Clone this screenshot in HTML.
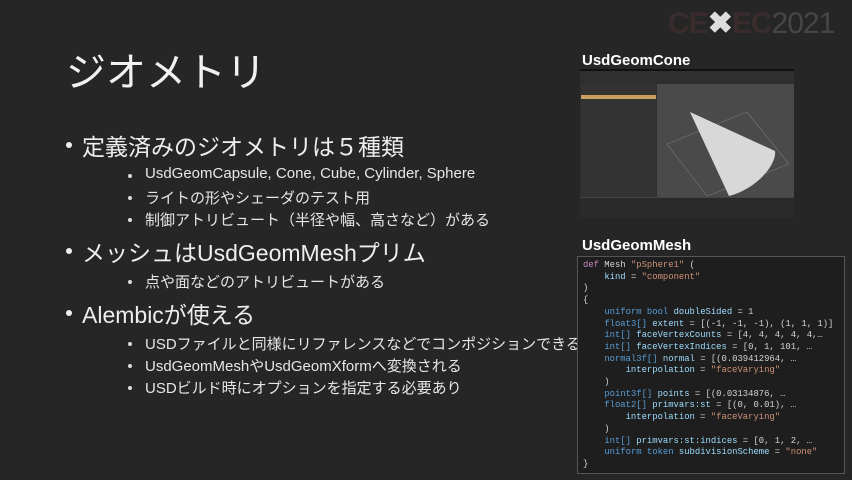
<!DOCTYPE html>
<html><head><meta charset="utf-8"><style>
*{margin:0;padding:0;box-sizing:border-box}
body{width:852px;height:480px;background:#262626;overflow:hidden;position:relative;font-family:"Liberation Sans","Noto Sans CJK JP",sans-serif;color:#eeeeee}
.a{position:absolute;white-space:nowrap}
.t{left:66px;top:40px;font-size:40px;color:#f2f2f2}
.b1{font-size:23px;left:66px}
.b1 i{position:absolute;left:0;top:14px;width:6px;height:6px;border-radius:50%;background:#eee}
.b1 span{position:absolute;left:16px}
.b2{font-size:15px;left:128px;color:#e6e6e6}
.b2 i{position:absolute;left:0;top:9px;width:4px;height:4px;border-radius:50%;background:#ddd}
.b2 span{position:absolute;left:17px}
.code{left:577px;top:256px;width:268px;height:218px;border:1px solid #555;background:#1e1e1e;font-family:"Liberation Mono",monospace;font-size:8.9px;line-height:11.7px;padding:3px 0 0 5px;color:#d4d4d4;overflow:hidden}
.k{color:#c586c0}.s{color:#ce9178}.b{color:#569cd6}.v{color:#9cdcfe}
</style></head><body>
<div class="a" style="left:668px;top:6px;font-size:30px;color:#3a2c2c;font-weight:bold;letter-spacing:-1px">CE<span style="color:#ddd">✖</span>EC<span style="font-weight:normal;color:#464646">2021</span></div>
<div class="a t">ジオメトリ</div>
<div class="a b1" style="top:128px"><i></i><span>定義済みのジオメトリは５種類</span></div>
<div class="a b2" style="top:165px"><i></i><span>UsdGeomCapsule, Cone, Cube, Cylinder, Sphere</span></div>
<div class="a b2" style="top:187px"><i></i><span>ライトの形やシェーダのテスト用</span></div>
<div class="a b2" style="top:209px"><i></i><span>制御アトリビュート（半径や幅、高さなど）がある</span></div>
<div class="a b1" style="top:234px"><i></i><span>メッシュはUsdGeomMeshプリム</span></div>
<div class="a b2" style="top:271px"><i></i><span>点や面などのアトリビュートがある</span></div>
<div class="a b1" style="top:296px"><i></i><span>Alembicが使える</span></div>
<div class="a b2" style="top:333px"><i></i><span>USDファイルと同様にリファレンスなどでコンポジションできる</span></div>
<div class="a b2" style="top:355px"><i></i><span>UsdGeomMeshやUsdGeomXformへ変換される</span></div>
<div class="a b2" style="top:377px"><i></i><span>USDビルド時にオプションを指定する必要あり</span></div>

<div class="a" style="left:582px;top:52px;font-size:15px;font-weight:bold;color:#fff">UsdGeomCone</div>
<div class="a" style="left:580px;top:69px;width:214px;height:147px;background:#2f2f2f;border-top:2px solid #111">
 <div class="a" style="left:1px;top:13px;width:75px;height:113px;background:#333"></div>
 <div class="a" style="left:1px;top:24px;width:75px;height:4px;background:#c8a060"></div>
 <div class="a" style="left:77px;top:13px;width:137px;height:113px;background:#4a4a4a"></div>
 <svg class="a" style="left:77px;top:13px" width="137" height="113"><polygon points="90,28 132,80 50,112 10,60" fill="none" stroke="#777" stroke-width="0.6"/><path d="M33,28 L118,67 C120,80 100,105 72,112 Z" fill="#d8d8d8"/></svg>
 <div class="a" style="left:0;top:126px;width:214px;height:21px;background:#2a2a2a;border-top:1px solid #444"></div>
</div>

<div class="a" style="left:582px;top:237px;font-size:15px;font-weight:bold;color:#fff">UsdGeomMesh</div>
<div class="a code"><span class="k">def</span> Mesh <span class="s">"pSphere1"</span> (<br>&nbsp;&nbsp;&nbsp;&nbsp;<span class="v">kind</span> = <span class="s">"component"</span><br>)<br>{<br>&nbsp;&nbsp;&nbsp;&nbsp;<span class="b">uniform bool</span> <span class="v">doubleSided</span> = 1<br>&nbsp;&nbsp;&nbsp;&nbsp;<span class="b">float3[]</span> <span class="v">extent</span> = [(-1, -1, -1), (1, 1, 1)]<br>&nbsp;&nbsp;&nbsp;&nbsp;<span class="b">int[]</span> <span class="v">faceVertexCounts</span> = [4, 4, 4, 4, 4,…<br>&nbsp;&nbsp;&nbsp;&nbsp;<span class="b">int[]</span> <span class="v">faceVertexIndices</span> = [0, 1, 101, …<br>&nbsp;&nbsp;&nbsp;&nbsp;<span class="b">normal3f[]</span> <span class="v">normal</span> = [(0.039412964, …<br>&nbsp;&nbsp;&nbsp;&nbsp;&nbsp;&nbsp;&nbsp;&nbsp;<span class="v">interpolation</span> = <span class="s">"faceVarying"</span><br>&nbsp;&nbsp;&nbsp;&nbsp;)<br>&nbsp;&nbsp;&nbsp;&nbsp;<span class="b">point3f[]</span> <span class="v">points</span> = [(0.03134876, …<br>&nbsp;&nbsp;&nbsp;&nbsp;<span class="b">float2[]</span> <span class="v">primvars:st</span> = [(0, 0.01), …<br>&nbsp;&nbsp;&nbsp;&nbsp;&nbsp;&nbsp;&nbsp;&nbsp;<span class="v">interpolation</span> = <span class="s">"faceVarying"</span><br>&nbsp;&nbsp;&nbsp;&nbsp;)<br>&nbsp;&nbsp;&nbsp;&nbsp;<span class="b">int[]</span> <span class="v">primvars:st:indices</span> = [0, 1, 2, …<br>&nbsp;&nbsp;&nbsp;&nbsp;<span class="b">uniform token</span> <span class="v">subdivisionScheme</span> = <span class="s">"none"</span><br>}</div>
</body></html>
